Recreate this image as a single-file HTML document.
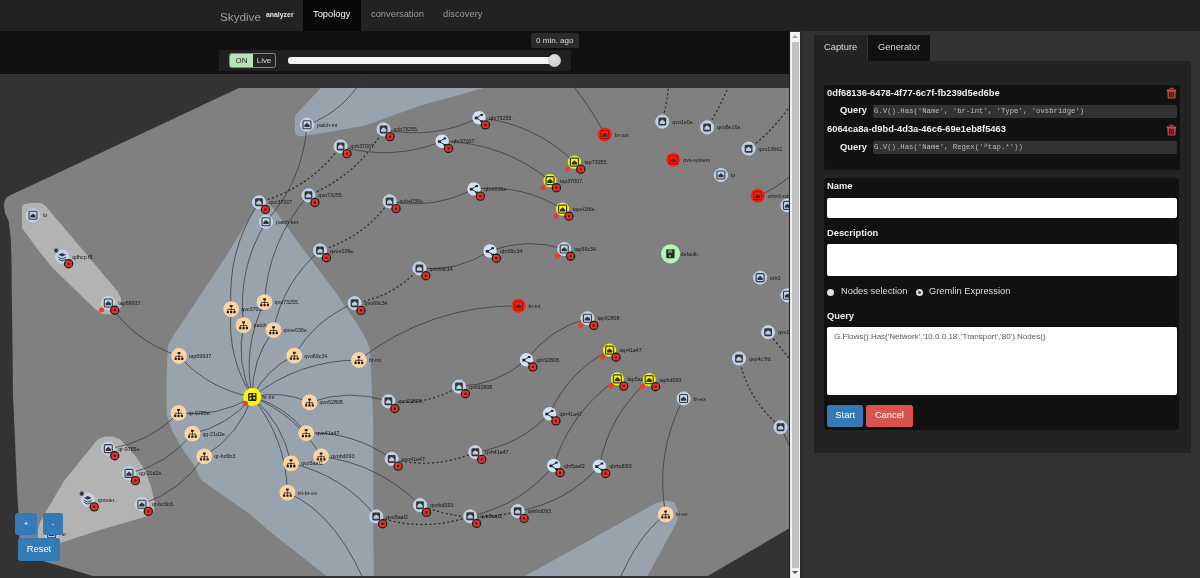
<!DOCTYPE html>
<html><head><meta charset="utf-8">
<style>
*{box-sizing:border-box;margin:0;padding:0}
html,body{width:1200px;height:578px;overflow:hidden;background:#333;font-family:"Liberation Sans",sans-serif;font-size:9.33px;color:#ddd}
.a{position:absolute;white-space:nowrap}
svg{display:block}
body>*{will-change:transform}
</style></head><body>
<!-- nav -->
<div class="a" style="left:0;top:0;width:1200px;height:31px;background:#222"></div>
<div class="a" style="left:220px;top:9.5px;font-size:11.7px;line-height:14px;color:#9d9d9d">Skydive</div>
<div class="a" style="left:266px;top:9.8px;font-size:6.9px;line-height:9px;font-weight:bold;color:#e6e6e6">analyzer</div>
<div class="a" style="left:303px;top:0;width:57.5px;height:31px;background:#080808"></div>
<div class="a" style="left:313px;top:8.5px;line-height:11px;color:#fff">Topology</div>
<div class="a" style="left:371px;top:8.5px;line-height:11px;color:#9d9d9d">conversation</div>
<div class="a" style="left:443px;top:8.5px;line-height:11px;color:#9d9d9d">discovery</div>
<!-- toolbar -->
<div class="a" style="left:0;top:31px;width:790px;height:43px;background:#111"></div>
<div class="a" style="left:219px;top:50px;width:352px;height:21px;background:#202020"></div>
<div class="a" style="left:228.5px;top:53px;width:46.5px;height:15px;border:1px solid #8a8a8a;border-radius:2.5px;background:#232323;overflow:hidden">
  <div class="a" style="left:0;top:0;width:23px;height:13px;background:#b8e2b8"></div>
  <div class="a" style="left:0;top:0;width:23px;height:13px;line-height:13px;text-align:center;color:#222;font-size:7.9px">ON</div>
  <div class="a" style="left:23px;top:0;width:22px;height:13px;line-height:13px;text-align:center;color:#ddd;font-size:7.9px">Live</div>
</div>
<div class="a" style="left:287.5px;top:56.8px;width:270px;height:7.2px;background:#f4f4f4;border-radius:3px"></div>
<div class="a" style="left:548px;top:54px;width:13.2px;height:13.2px;background:radial-gradient(circle at 45% 35%,#e4e4e4,#c2c2c2);border-radius:50%"></div>
<div class="a" style="left:530.5px;top:33.3px;width:47.5px;height:15px;background:#2b2b2b;border-radius:2.5px;line-height:15px;text-align:center;color:#ddd;font-size:8px">0 min. ago</div>
<div class="a" style="left:551.6px;top:48.3px;width:0;height:0;border-left:3px solid transparent;border-right:3px solid transparent;border-top:3.3px solid #0a0a0a"></div>
<!-- canvas -->
<div class="a" style="left:0;top:74px;width:789px;height:502px;overflow:hidden"><svg width="789" height="502" viewBox="0 74 789 502">
<rect x="0" y="74" width="789" height="502" fill="#333"/>
<polygon fill="#808080" points="256,80 800,80 800,522.2 683.7,590 140,590 93,576 43,561 30,557 22,552 19.5,540 18.6,514 17.3,495 15,440 13,395 12.5,350 11.8,295 11.5,260 10.7,238 8.7,221 5,213 3.9,206 4.5,201 7,197 13.8,193.5 30,186 60,171.9"/>
<polygon fill="#b3b3b3" points="22,206 24,204 33.7,202.8 41.5,203.2 45.6,206 117.6,291.2 121,298.2 121,306.5 118,312 113.4,314.5 102.3,314 95.4,309.3 52.5,267.7 40,252.5 22,228"/>
<polygon fill="#b3b3b3" points="97.5,439.6 104.3,436.7 112,436.5 120,439 135.8,456.5 144.8,470 151.5,488 155,506 152.7,513.9 148,516 97.5,530.8 59.3,543.2 45,546 38,541 38,530 40,521.8 63.8,481.3"/>
<polygon fill="#99a3ae" points="264,203 270,205 274.5,210 309.6,257.8 334,290 360.5,329 366,339 369.8,349 371.4,380 373.2,420 373.4,530 374,590 337,590 326.4,576 268,530 250,514.2 201.2,480 193.2,464 183.2,450 172,430.8 166.6,414 166.6,375 168,345 175,333 184,320 223.6,260 252.7,213 258,206"/>
<polygon fill="#99a3ae" points="326,80 512,80 483.7,88 420,105.8 365,125.5 320,133.5 300,136.5 296,135 294.9,131 294.9,118 296.4,114 320.8,88"/>
<polygon fill="#99a3ae" points="500,590 636,590 647,576.8 665.3,543.3 677.5,520.5 677.5,509.8 674.4,502.2 665.3,500.4 656.1,503 580,545.6"/>
<rect x="0" y="74" width="789" height="14" fill="#333"/>
<g fill="none" stroke="#3c3c3c" stroke-width="0.8">
<g stroke="#383838" stroke-width="0.75">
<path d="M231.2 309.1Q226.6 356.7 252.3 397.0"/>
<path d="M264.6 302.2Q242.1 347.5 252.3 397.0"/>
<path d="M243.6 325.2Q235.6 362.6 252.3 397.0"/>
<path d="M273.5 330.2Q251.4 360.0 252.3 397.0"/>
<path d="M179.0 356.0Q208.6 389.1 252.3 397.0"/>
<path d="M294.3 355.7Q266.2 369.1 252.3 397.0"/>
<path d="M358.9 360.0Q299.2 360.2 252.3 397.0"/>
<path d="M178.5 412.9Q218.1 417.6 252.3 397.0"/>
<path d="M192.4 433.7Q228.7 425.7 252.3 397.0"/>
<path d="M204.3 456.4Q238.5 435.0 252.3 397.0"/>
<path d="M309.5 402.4Q281.8 389.9 252.3 397.0"/>
<path d="M306.2 433.1Q285.5 405.8 252.3 397.0"/>
<path d="M321.1 456.4Q296.9 414.9 252.3 397.0"/>
<path d="M291.0 463.3Q283.1 423.5 252.3 397.0"/>
<path d="M287.4 492.6Q286.3 438.8 252.3 397.0"/>
<path d="M259.0 202.3Q226.7 250.9 231.2 309.1"/>
<path d="M308.5 195.3Q268.2 241.2 264.6 302.2"/>
<path d="M266.0 221.8Q237.0 269.6 243.6 325.2"/>
<path d="M320.0 250.5Q283.0 282.4 273.5 330.2"/>
<path d="M108.3 303.0Q134.5 341.7 179.0 356.0"/>
<path d="M354.6 303.2Q315.4 319.1 294.3 355.7"/>
<path d="M518.5 305.8Q429.4 305.4 358.9 360.0"/>
<path d="M108.3 448.6Q149.5 442.8 178.5 412.9"/>
<path d="M129.0 473.4Q167.5 464.5 192.4 433.7"/>
<path d="M141.9 504.2Q181.3 491.0 204.3 456.4"/>
<path d="M388.4 401.3Q348.8 388.3 309.5 402.4"/>
<path d="M391.7 458.9Q353.4 431.3 306.2 433.1"/>
<path d="M420.0 505.2Q378.9 463.8 321.1 456.4"/>
<path d="M376.2 516.5Q342.8 475.2 291.0 463.3"/>
<path d="M340.6 146.4Q392.2 161.3 442.1 141.3"/>
<path d="M383.6 129.4Q433.3 140.0 479.0 117.7"/>
<path d="M389.6 201.4Q433.9 209.7 474.0 188.9"/>
<path d="M419.4 268.5Q457.7 271.9 490.0 251.0"/>
<path d="M459.0 386.6Q497.4 384.8 526.5 359.8"/>
<path d="M475.3 452.2Q519.0 445.7 549.5 413.7"/>
<path d="M470.2 516.3Q520.7 505.3 553.7 465.5"/>
<path d="M517.7 511.2Q566.2 502.8 599.3 466.3"/>
<path d="M550.0 180.6Q502.8 142.4 442.1 141.3"/>
<path d="M574.4 162.1Q534.3 123.5 479.0 117.7"/>
<path d="M562.6 209.1Q521.8 183.8 474.0 188.9"/>
<path d="M564.2 249.0Q526.8 237.2 490.0 251.0"/>
<path d="M587.4 318.3Q549.8 328.6 526.5 359.8"/>
<path d="M609.6 350.1Q568.6 371.6 549.5 413.7"/>
<path d="M617.4 378.9Q570.7 411.2 553.7 465.5"/>
<path d="M649.2 379.6Q609.3 414.4 599.3 466.3"/>
<path d="M266.0 221.8Q303.2 180.3 307.0 124.7"/>
<path d="M683.6 398.5Q654.7 453.4 665.6 514.4"/>
<path d="M307 124.7Q345 112 368 70"/>
<path d="M604.8 134.5Q588 102 566 78"/>
<path d="M287.4 492.6Q340 515 372 600"/>
<path d="M665.6 514.4Q632 540 612 600"/>
<path d="M757.7 195.7Q775 190 795 172"/>
<path d="M780.6 427.2Q786 438 795 458"/>
</g>
<g stroke="#333" stroke-width="1.35" stroke-dasharray="2.2 2.3">
<path d="M259.0 202.3Q309.4 188.4 340.6 146.4"/>
<path d="M308.5 195.3Q357.4 175.3 383.6 129.4"/>
<path d="M320.0 250.5Q363.2 237.9 389.6 201.4"/>
<path d="M354.6 303.2Q393.0 297.0 419.4 268.5"/>
<path d="M388.4 401.3Q426.2 406.1 459.0 386.6"/>
<path d="M391.7 458.9Q434.7 469.9 475.3 452.2"/>
<path d="M420.0 505.2Q467.8 525.0 517.7 511.2"/>
<path d="M376.2 516.5Q423.2 532.6 470.2 516.3"/>
<path d="M739.0 358.5Q748.0 400.0 780.6 427.2"/>
<path d="M662.3 121.6Q668 100 670 70"/>
<path d="M707.1 127.4Q722 105 735 70"/>
<path d="M748.6 148.7Q778 128 800 90"/>
<path d="M768.1 332.2Q778 345 795 365"/>
</g>
</g>
<g font-family="Liberation Sans" font-size="5.3" fill="#151515">
<circle cx="307" cy="124.7" r="6.6" fill="#bfd2ea" stroke="#cadcf1" stroke-width="0.8"/><rect x="303" y="120.7" width="8" height="8" rx="1" fill="none" stroke="#3a3a3a" stroke-width="1.1"/><path d="M304.4 127v-2l1.4-1 1.2-1.2 1.2 1.2 1.4 1v2z" fill="#333"/><text x="317" y="126.7">patch-int</text>
<circle cx="340.6" cy="146.4" r="6.6" fill="#bfd2ea" stroke="#cadcf1" stroke-width="0.8"/><rect x="336.7" y="142.4" width="7.8" height="8" rx="1.4" fill="#363636"/><path d="M338 148.7v-2.2l1-0.8q1.6-2.2 3.2 0l1 0.8v2.2z" fill="#bccde2"/><circle cx="347" cy="153.6" r="4.7" fill="#1c1c1c"/><rect x="343.7" y="150.3" width="6.6" height="6.6" rx="1.8" fill="#e3302b"/><rect x="346.1" y="152.7" width="1.9" height="1.9" fill="#111"/><text x="350.6" y="148.4">qvb37007.</text>
<circle cx="383.6" cy="129.4" r="6.6" fill="#bfd2ea" stroke="#cadcf1" stroke-width="0.8"/><rect x="379.7" y="125.4" width="7.8" height="8" rx="1.4" fill="#363636"/><path d="M381 131.7v-2.2l1-0.8q1.6-2.2 3.2 0l1 0.8v2.2z" fill="#bccde2"/><circle cx="390" cy="136.6" r="4.7" fill="#1c1c1c"/><rect x="386.7" y="133.3" width="6.6" height="6.6" rx="1.8" fill="#e3302b"/><rect x="389.1" y="135.7" width="1.9" height="1.9" fill="#111"/><text x="393.6" y="131.4">qvb73255.</text>
<circle cx="442.1" cy="141.3" r="6.7" fill="#cfe2f6"/><path d="M439.5 141.6L444.5 138.5M439.5 141.6L444.5 144.7" stroke="#222" stroke-width="0.9"/><rect x="437.9" y="140.3" width="3" height="2.6" fill="#222"/><rect x="443.5" y="137.5" width="2.6" height="2" fill="#222"/><rect x="443.5" y="143.9" width="2.6" height="2" fill="#222"/><circle cx="448.5" cy="148.5" r="4.7" fill="#1c1c1c"/><rect x="445.2" y="145.2" width="6.6" height="6.6" rx="1.8" fill="#e3302b"/><rect x="447.6" y="147.6" width="1.9" height="1.9" fill="#111"/><text x="452.1" y="143.3">qbr37007.</text>
<circle cx="479" cy="117.7" r="6.7" fill="#cfe2f6"/><path d="M476.4 118L481.4 114.9M476.4 118L481.4 121.1" stroke="#222" stroke-width="0.9"/><rect x="474.8" y="116.7" width="3" height="2.6" fill="#222"/><rect x="480.4" y="113.9" width="2.6" height="2" fill="#222"/><rect x="480.4" y="120.3" width="2.6" height="2" fill="#222"/><circle cx="485.4" cy="124.9" r="4.7" fill="#1c1c1c"/><rect x="482.1" y="121.6" width="6.6" height="6.6" rx="1.8" fill="#e3302b"/><rect x="484.4" y="124" width="1.9" height="1.9" fill="#111"/><text x="489" y="119.7">qbr73255.</text>
<circle cx="259" cy="202.3" r="6.6" fill="#bfd2ea" stroke="#cadcf1" stroke-width="0.8"/><rect x="255.1" y="198.3" width="7.8" height="8" rx="1.4" fill="#363636"/><path d="M256.4 204.6v-2.2l1-0.8q1.6-2.2 3.2 0l1 0.8v2.2z" fill="#bccde2"/><circle cx="265.4" cy="209.5" r="4.7" fill="#1c1c1c"/><rect x="262.1" y="206.2" width="6.6" height="6.6" rx="1.8" fill="#e3302b"/><rect x="264.4" y="208.6" width="1.9" height="1.9" fill="#111"/><text x="269" y="204.3">qvo37007.</text>
<circle cx="266" cy="221.8" r="6.6" fill="#bfd2ea" stroke="#cadcf1" stroke-width="0.8"/><rect x="262" y="217.8" width="8" height="8" rx="1" fill="none" stroke="#3a3a3a" stroke-width="1.1"/><path d="M263.4 224.1v-2l1.4-1 1.2-1.2 1.2 1.2 1.4 1v2z" fill="#333"/><text x="276" y="223.8">patch-tun</text>
<circle cx="308.5" cy="195.3" r="6.6" fill="#bfd2ea" stroke="#cadcf1" stroke-width="0.8"/><rect x="304.6" y="191.3" width="7.8" height="8" rx="1.4" fill="#363636"/><path d="M305.9 197.6v-2.2l1-0.8q1.6-2.2 3.2 0l1 0.8v2.2z" fill="#bccde2"/><circle cx="314.9" cy="202.5" r="4.7" fill="#1c1c1c"/><rect x="311.6" y="199.2" width="6.6" height="6.6" rx="1.8" fill="#e3302b"/><rect x="313.9" y="201.6" width="1.9" height="1.9" fill="#111"/><text x="318.5" y="197.3">qvo73255.</text>
<circle cx="389.6" cy="201.4" r="6.6" fill="#bfd2ea" stroke="#cadcf1" stroke-width="0.8"/><rect x="385.7" y="197.4" width="7.8" height="8" rx="1.4" fill="#363636"/><path d="M387 203.7v-2.2l1-0.8q1.6-2.2 3.2 0l1 0.8v2.2z" fill="#bccde2"/><circle cx="396" cy="208.6" r="4.7" fill="#1c1c1c"/><rect x="392.7" y="205.3" width="6.6" height="6.6" rx="1.8" fill="#e3302b"/><rect x="395.1" y="207.7" width="1.9" height="1.9" fill="#111"/><text x="399.6" y="203.4">qvbe036e.</text>
<circle cx="474" cy="188.9" r="6.7" fill="#cfe2f6"/><path d="M471.4 189.2L476.4 186.1M471.4 189.2L476.4 192.3" stroke="#222" stroke-width="0.9"/><rect x="469.8" y="187.9" width="3" height="2.6" fill="#222"/><rect x="475.4" y="185.1" width="2.6" height="2" fill="#222"/><rect x="475.4" y="191.5" width="2.6" height="2" fill="#222"/><circle cx="480.4" cy="196.1" r="4.7" fill="#1c1c1c"/><rect x="477.1" y="192.8" width="6.6" height="6.6" rx="1.8" fill="#e3302b"/><rect x="479.4" y="195.2" width="1.9" height="1.9" fill="#111"/><text x="484" y="190.9">qbre036e.</text>
<circle cx="574.4" cy="162.1" r="6.6" fill="#f4f400"/><rect x="570.4" y="158.1" width="8" height="8" rx="1" fill="none" stroke="#3c3c3c" stroke-width="1.2"/><path d="M571.8 164.4v-2l1.4-1 1.2-1.2 1.2 1.2 1.4 1v2z" fill="#2e2e2e"/><circle cx="580.8" cy="169.3" r="4.7" fill="#1c1c1c"/><rect x="577.5" y="166" width="6.6" height="6.6" rx="1.8" fill="#e3302b"/><rect x="579.8" y="168.3" width="1.9" height="1.9" fill="#111"/><circle cx="567.7" cy="169.1" r="2.6" fill="#f03a2e"/><text x="584.4" y="164.1">tap73255.</text>
<circle cx="550" cy="180.6" r="6.6" fill="#f4f400"/><rect x="546" y="176.6" width="8" height="8" rx="1" fill="none" stroke="#3c3c3c" stroke-width="1.2"/><path d="M547.4 182.9v-2l1.4-1 1.2-1.2 1.2 1.2 1.4 1v2z" fill="#2e2e2e"/><circle cx="556.4" cy="187.8" r="4.7" fill="#1c1c1c"/><rect x="553.1" y="184.5" width="6.6" height="6.6" rx="1.8" fill="#e3302b"/><rect x="555.4" y="186.8" width="1.9" height="1.9" fill="#111"/><circle cx="543.3" cy="187.6" r="2.6" fill="#f03a2e"/><text x="560" y="182.6">tap37007.</text>
<circle cx="562.6" cy="209.1" r="6.6" fill="#f4f400"/><rect x="558.6" y="205.1" width="8" height="8" rx="1" fill="none" stroke="#3c3c3c" stroke-width="1.2"/><path d="M560 211.4v-2l1.4-1 1.2-1.2 1.2 1.2 1.4 1v2z" fill="#2e2e2e"/><circle cx="569" cy="216.3" r="4.7" fill="#1c1c1c"/><rect x="565.7" y="213" width="6.6" height="6.6" rx="1.8" fill="#e3302b"/><rect x="568" y="215.3" width="1.9" height="1.9" fill="#111"/><circle cx="555.9" cy="216.1" r="2.6" fill="#f03a2e"/><text x="572.6" y="211.1">tape036e.</text>
<circle cx="604.8" cy="134.5" r="7" fill="#fe1c0c"/><rect x="600.8" y="130.5" width="8" height="8" rx="1" fill="none" stroke="#b00d05" stroke-width="1.1"/><path d="M602.2 136.8v-2l1.4-1 1.2-1.2 1.2 1.2 1.4 1v2z" fill="#333"/><text x="614.8" y="136.5">br-tun</text>
<circle cx="662.3" cy="121.6" r="6.6" fill="#bfd2ea" stroke="#cadcf1" stroke-width="0.8"/><rect x="658.4" y="117.6" width="7.8" height="8" rx="1.4" fill="#363636"/><path d="M659.7 123.9v-2.2l1-0.8q1.6-2.2 3.2 0l1 0.8v2.2z" fill="#bccde2"/><text x="672.3" y="123.6">qvo1e0e.</text>
<circle cx="707.1" cy="127.4" r="6.6" fill="#bfd2ea" stroke="#cadcf1" stroke-width="0.8"/><rect x="703.2" y="123.4" width="7.8" height="8" rx="1.4" fill="#363636"/><path d="M704.5 129.7v-2.2l1-0.8q1.6-2.2 3.2 0l1 0.8v2.2z" fill="#bccde2"/><text x="717.1" y="129.4">qvo8e16e.</text>
<circle cx="748.6" cy="148.7" r="6.6" fill="#bfd2ea" stroke="#cadcf1" stroke-width="0.8"/><rect x="744.7" y="144.7" width="7.8" height="8" rx="1.4" fill="#363636"/><path d="M746 151v-2.2l1-0.8q1.6-2.2 3.2 0l1 0.8v2.2z" fill="#bccde2"/><text x="758.6" y="150.7">qvo13942.</text>
<circle cx="673.3" cy="159.8" r="7" fill="#fe1c0c"/><rect x="669.3" y="155.8" width="8" height="8" rx="1" fill="none" stroke="#b00d05" stroke-width="1.1"/><path d="M670.7 162.1v-2l1.4-1 1.2-1.2 1.2 1.2 1.4 1v2z" fill="#333"/><text x="683.3" y="161.8">ovs-system</text>
<circle cx="720.9" cy="175" r="6.6" fill="#bfd2ea" stroke="#cadcf1" stroke-width="0.8"/><rect x="716.9" y="171" width="8" height="8" rx="1" fill="none" stroke="#3a3a3a" stroke-width="1.1"/><path d="M718.3 177.3v-2l1.4-1 1.2-1.2 1.2 1.2 1.4 1v2z" fill="#333"/><text x="730.9" y="177">lo</text>
<circle cx="757.7" cy="195.7" r="7" fill="#fe1c0c"/><rect x="753.7" y="191.7" width="8" height="8" rx="1" fill="none" stroke="#b00d05" stroke-width="1.1"/><path d="M755.1 198v-2l1.4-1 1.2-1.2 1.2 1.2 1.4 1v2z" fill="#333"/><text x="767.7" y="197.7">virbr0-nic</text>
<circle cx="787.5" cy="205.4" r="6.6" fill="#bfd2ea" stroke="#cadcf1" stroke-width="0.8"/><rect x="783.5" y="201.4" width="8" height="8" rx="1" fill="none" stroke="#3a3a3a" stroke-width="1.1"/><path d="M784.9 207.7v-2l1.4-1 1.2-1.2 1.2 1.2 1.4 1v2z" fill="#333"/>
<circle cx="33" cy="215.3" r="6.6" fill="#bfd2ea" stroke="#cadcf1" stroke-width="0.8"/><rect x="29" y="211.3" width="8" height="8" rx="1" fill="none" stroke="#3a3a3a" stroke-width="1.1"/><path d="M30.4 217.6v-2l1.4-1 1.2-1.2 1.2 1.2 1.4 1v2z" fill="#333"/><text x="43" y="217.3">lo</text>
<circle cx="62.2" cy="256.6" r="6.6" fill="#bfd2ea" stroke="#cadcf1" stroke-width="0.8"/><path d="M58.4 254.8l3.8-1.8 3.8 1.8-3.8 1.8z" fill="#333"/><path d="M58.4 257.2l3.8 1.8 3.8-1.8M58.4 259.2l3.8 1.8 3.8-1.8" stroke="#333" stroke-width="0.9" fill="none"/><circle cx="56.2" cy="250.6" r="2.1" fill="#333" stroke="#777" stroke-width="0.6"/><circle cx="68.6" cy="263.8" r="4.7" fill="#1c1c1c"/><rect x="65.3" y="260.5" width="6.6" height="6.6" rx="1.8" fill="#e3302b"/><rect x="67.7" y="262.9" width="1.9" height="1.9" fill="#111"/><text x="72.2" y="258.6">qdhcp.f8.</text>
<circle cx="108.3" cy="303" r="6.6" fill="#bfd2ea" stroke="#cadcf1" stroke-width="0.8"/><rect x="104.3" y="299" width="8" height="8" rx="1" fill="none" stroke="#3a3a3a" stroke-width="1.1"/><path d="M105.7 305.3v-2l1.4-1 1.2-1.2 1.2 1.2 1.4 1v2z" fill="#333"/><circle cx="114.7" cy="310.2" r="4.7" fill="#1c1c1c"/><rect x="111.4" y="306.9" width="6.6" height="6.6" rx="1.8" fill="#e3302b"/><rect x="113.8" y="309.2" width="1.9" height="1.9" fill="#111"/><circle cx="101.6" cy="310" r="2.6" fill="#f03a2e"/><text x="118.3" y="305">tap69937.</text>
<circle cx="320" cy="250.5" r="6.6" fill="#bfd2ea" stroke="#cadcf1" stroke-width="0.8"/><rect x="316.1" y="246.5" width="7.8" height="8" rx="1.4" fill="#363636"/><path d="M317.4 252.8v-2.2l1-0.8q1.6-2.2 3.2 0l1 0.8v2.2z" fill="#bccde2"/><circle cx="326.4" cy="257.7" r="4.7" fill="#1c1c1c"/><rect x="323.1" y="254.4" width="6.6" height="6.6" rx="1.8" fill="#e3302b"/><rect x="325.4" y="256.8" width="1.9" height="1.9" fill="#111"/><text x="330" y="252.5">qvoe036e.</text>
<circle cx="354.6" cy="303.2" r="6.6" fill="#bfd2ea" stroke="#cadcf1" stroke-width="0.8"/><rect x="350.7" y="299.2" width="7.8" height="8" rx="1.4" fill="#363636"/><path d="M352 305.5v-2.2l1-0.8q1.6-2.2 3.2 0l1 0.8v2.2z" fill="#bccde2"/><circle cx="361" cy="310.4" r="4.7" fill="#1c1c1c"/><rect x="357.7" y="307.1" width="6.6" height="6.6" rx="1.8" fill="#e3302b"/><rect x="360.1" y="309.4" width="1.9" height="1.9" fill="#111"/><text x="364.6" y="305.2">qvo69c34.</text>
<circle cx="231.2" cy="309.1" r="7.9" fill="#fcd3a2"/><rect x="229.8" y="305.1" width="2.8" height="2" rx="0.3" fill="#1e1e1e"/><path d="M231.2 307v2.3M227.9 309.4h6.6M227.9 309.4v1.5M231.2 309.4v1.5M234.5 309.4v1.5" stroke="#1e1e1e" stroke-width="0.75" fill="none"/><rect x="226.8" y="310.9" width="2.2" height="2.3" rx="0.3" fill="#1e1e1e"/><rect x="230.1" y="310.9" width="2.2" height="2.3" rx="0.3" fill="#1e1e1e"/><rect x="233.4" y="310.9" width="2.2" height="2.3" rx="0.3" fill="#1e1e1e"/><text x="241.2" y="311.1">qvo37007.</text>
<circle cx="264.6" cy="302.2" r="7.9" fill="#fcd3a2"/><rect x="263.2" y="298.2" width="2.8" height="2" rx="0.3" fill="#1e1e1e"/><path d="M264.6 300.1v2.3M261.3 302.5h6.6M261.3 302.5v1.5M264.6 302.5v1.5M267.9 302.5v1.5" stroke="#1e1e1e" stroke-width="0.75" fill="none"/><rect x="260.2" y="304" width="2.2" height="2.3" rx="0.3" fill="#1e1e1e"/><rect x="263.5" y="304" width="2.2" height="2.3" rx="0.3" fill="#1e1e1e"/><rect x="266.8" y="304" width="2.2" height="2.3" rx="0.3" fill="#1e1e1e"/><text x="274.6" y="304.2">qvo73255.</text>
<circle cx="243.6" cy="325.2" r="7.9" fill="#fcd3a2"/><rect x="242.2" y="321.2" width="2.8" height="2" rx="0.3" fill="#1e1e1e"/><path d="M243.6 323.1v2.3M240.3 325.5h6.6M240.3 325.5v1.5M243.6 325.5v1.5M246.9 325.5v1.5" stroke="#1e1e1e" stroke-width="0.75" fill="none"/><rect x="239.2" y="327" width="2.2" height="2.3" rx="0.3" fill="#1e1e1e"/><rect x="242.5" y="327" width="2.2" height="2.3" rx="0.3" fill="#1e1e1e"/><rect x="245.8" y="327" width="2.2" height="2.3" rx="0.3" fill="#1e1e1e"/><text x="253.6" y="327.2">patch.</text>
<circle cx="273.5" cy="330.2" r="7.9" fill="#fcd3a2"/><rect x="272.1" y="326.2" width="2.8" height="2" rx="0.3" fill="#1e1e1e"/><path d="M273.5 328.1v2.3M270.2 330.5h6.6M270.2 330.5v1.5M273.5 330.5v1.5M276.8 330.5v1.5" stroke="#1e1e1e" stroke-width="0.75" fill="none"/><rect x="269.1" y="332" width="2.2" height="2.3" rx="0.3" fill="#1e1e1e"/><rect x="272.4" y="332" width="2.2" height="2.3" rx="0.3" fill="#1e1e1e"/><rect x="275.7" y="332" width="2.2" height="2.3" rx="0.3" fill="#1e1e1e"/><text x="283.5" y="332.2">qvoe036e.</text>
<circle cx="179" cy="356" r="7.9" fill="#fcd3a2"/><rect x="177.6" y="352" width="2.8" height="2" rx="0.3" fill="#1e1e1e"/><path d="M179 353.9v2.3M175.7 356.3h6.6M175.7 356.3v1.5M179 356.3v1.5M182.3 356.3v1.5" stroke="#1e1e1e" stroke-width="0.75" fill="none"/><rect x="174.6" y="357.8" width="2.2" height="2.3" rx="0.3" fill="#1e1e1e"/><rect x="177.9" y="357.8" width="2.2" height="2.3" rx="0.3" fill="#1e1e1e"/><rect x="181.2" y="357.8" width="2.2" height="2.3" rx="0.3" fill="#1e1e1e"/><text x="189" y="358">tap69937.</text>
<circle cx="294.3" cy="355.7" r="7.9" fill="#fcd3a2"/><rect x="292.9" y="351.7" width="2.8" height="2" rx="0.3" fill="#1e1e1e"/><path d="M294.3 353.6v2.3M291 356h6.6M291 356v1.5M294.3 356v1.5M297.6 356v1.5" stroke="#1e1e1e" stroke-width="0.75" fill="none"/><rect x="289.9" y="357.5" width="2.2" height="2.3" rx="0.3" fill="#1e1e1e"/><rect x="293.2" y="357.5" width="2.2" height="2.3" rx="0.3" fill="#1e1e1e"/><rect x="296.5" y="357.5" width="2.2" height="2.3" rx="0.3" fill="#1e1e1e"/><text x="304.3" y="357.7">qvo69c34.</text>
<circle cx="358.9" cy="360" r="7.9" fill="#fcd3a2"/><rect x="357.5" y="356" width="2.8" height="2" rx="0.3" fill="#1e1e1e"/><path d="M358.9 357.9v2.3M355.6 360.3h6.6M355.6 360.3v1.5M358.9 360.3v1.5M362.2 360.3v1.5" stroke="#1e1e1e" stroke-width="0.75" fill="none"/><rect x="354.5" y="361.8" width="2.2" height="2.3" rx="0.3" fill="#1e1e1e"/><rect x="357.8" y="361.8" width="2.2" height="2.3" rx="0.3" fill="#1e1e1e"/><rect x="361.1" y="361.8" width="2.2" height="2.3" rx="0.3" fill="#1e1e1e"/><text x="368.9" y="362">br-int</text>
<circle cx="419.4" cy="268.5" r="6.6" fill="#bfd2ea" stroke="#cadcf1" stroke-width="0.8"/><rect x="415.5" y="264.5" width="7.8" height="8" rx="1.4" fill="#363636"/><path d="M416.8 270.8v-2.2l1-0.8q1.6-2.2 3.2 0l1 0.8v2.2z" fill="#bccde2"/><circle cx="425.8" cy="275.7" r="4.7" fill="#1c1c1c"/><rect x="422.5" y="272.4" width="6.6" height="6.6" rx="1.8" fill="#e3302b"/><rect x="424.8" y="274.8" width="1.9" height="1.9" fill="#111"/><text x="429.4" y="270.5">qvb69c34.</text>
<circle cx="490" cy="251" r="6.7" fill="#cfe2f6"/><path d="M487.4 251.3L492.4 248.2M487.4 251.3L492.4 254.4" stroke="#222" stroke-width="0.9"/><rect x="485.8" y="250" width="3" height="2.6" fill="#222"/><rect x="491.4" y="247.2" width="2.6" height="2" fill="#222"/><rect x="491.4" y="253.6" width="2.6" height="2" fill="#222"/><circle cx="496.4" cy="258.2" r="4.7" fill="#1c1c1c"/><rect x="493.1" y="254.9" width="6.6" height="6.6" rx="1.8" fill="#e3302b"/><rect x="495.4" y="257.2" width="1.9" height="1.9" fill="#111"/><text x="500" y="253">qbr69c34.</text>
<circle cx="564.2" cy="249" r="6.6" fill="#bfd2ea" stroke="#cadcf1" stroke-width="0.8"/><rect x="560.2" y="245" width="8" height="8" rx="1" fill="none" stroke="#3a3a3a" stroke-width="1.1"/><path d="M561.6 251.3v-2l1.4-1 1.2-1.2 1.2 1.2 1.4 1v2z" fill="#333"/><circle cx="570.6" cy="256.2" r="4.7" fill="#1c1c1c"/><rect x="567.3" y="252.9" width="6.6" height="6.6" rx="1.8" fill="#e3302b"/><rect x="569.6" y="255.2" width="1.9" height="1.9" fill="#111"/><circle cx="557.5" cy="256" r="2.6" fill="#f03a2e"/><text x="574.2" y="251">tap69c34.</text>
<circle cx="518.5" cy="305.8" r="7" fill="#fe1c0c"/><rect x="514.5" y="301.8" width="8" height="8" rx="1" fill="none" stroke="#b00d05" stroke-width="1.1"/><path d="M515.9 308.1v-2l1.4-1 1.2-1.2 1.2 1.2 1.4 1v2z" fill="#333"/><text x="528.5" y="307.8">br-int</text>
<circle cx="587.4" cy="318.3" r="6.6" fill="#bfd2ea" stroke="#cadcf1" stroke-width="0.8"/><rect x="583.4" y="314.3" width="8" height="8" rx="1" fill="none" stroke="#3a3a3a" stroke-width="1.1"/><path d="M584.8 320.6v-2l1.4-1 1.2-1.2 1.2 1.2 1.4 1v2z" fill="#333"/><circle cx="593.8" cy="325.5" r="4.7" fill="#1c1c1c"/><rect x="590.5" y="322.2" width="6.6" height="6.6" rx="1.8" fill="#e3302b"/><rect x="592.8" y="324.6" width="1.9" height="1.9" fill="#111"/><circle cx="580.7" cy="325.3" r="2.6" fill="#f03a2e"/><text x="597.4" y="320.3">tap92808.</text>
<circle cx="526.5" cy="359.8" r="6.7" fill="#cfe2f6"/><path d="M523.9 360.1L528.9 357M523.9 360.1L528.9 363.2" stroke="#222" stroke-width="0.9"/><rect x="522.3" y="358.8" width="3" height="2.6" fill="#222"/><rect x="527.9" y="356" width="2.6" height="2" fill="#222"/><rect x="527.9" y="362.4" width="2.6" height="2" fill="#222"/><circle cx="532.9" cy="367" r="4.7" fill="#1c1c1c"/><rect x="529.6" y="363.7" width="6.6" height="6.6" rx="1.8" fill="#e3302b"/><rect x="531.9" y="366.1" width="1.9" height="1.9" fill="#111"/><text x="536.5" y="361.8">qbr92808.</text>
<circle cx="609.6" cy="350.1" r="6.6" fill="#f4f400"/><rect x="605.6" y="346.1" width="8" height="8" rx="1" fill="none" stroke="#3c3c3c" stroke-width="1.2"/><path d="M607 352.4v-2l1.4-1 1.2-1.2 1.2 1.2 1.4 1v2z" fill="#2e2e2e"/><circle cx="616" cy="357.3" r="4.7" fill="#1c1c1c"/><rect x="612.7" y="354" width="6.6" height="6.6" rx="1.8" fill="#e3302b"/><rect x="615" y="356.4" width="1.9" height="1.9" fill="#111"/><circle cx="602.9" cy="357.1" r="2.6" fill="#f03a2e"/><text x="619.6" y="352.1">tap41a47.</text>
<circle cx="670.6" cy="253.8" r="9.6" fill="#b2f6b9"/><rect x="666.2" y="249.3" width="8.4" height="9" rx="1" fill="#2b2b2b"/><rect x="667.8" y="249.3" width="4.4" height="3.6" fill="#6a8a6a"/><rect x="669" y="255" width="2" height="2" fill="#6a8a6a"/><text x="680.6" y="255.8">default-.</text>
<circle cx="760.1" cy="277.6" r="6.6" fill="#bfd2ea" stroke="#cadcf1" stroke-width="0.8"/><rect x="756.1" y="273.6" width="8" height="8" rx="1" fill="none" stroke="#3a3a3a" stroke-width="1.1"/><path d="M757.5 279.9v-2l1.4-1 1.2-1.2 1.2 1.2 1.4 1v2z" fill="#333"/><text x="770.1" y="279.6">eth0</text>
<circle cx="787.5" cy="295.3" r="6.6" fill="#bfd2ea" stroke="#cadcf1" stroke-width="0.8"/><rect x="783.5" y="291.3" width="8" height="8" rx="1" fill="none" stroke="#3a3a3a" stroke-width="1.1"/><path d="M784.9 297.6v-2l1.4-1 1.2-1.2 1.2 1.2 1.4 1v2z" fill="#333"/>
<circle cx="768.1" cy="332.2" r="6.6" fill="#bfd2ea" stroke="#cadcf1" stroke-width="0.8"/><rect x="764.2" y="328.2" width="7.8" height="8" rx="1.4" fill="#363636"/><path d="M765.5 334.5v-2.2l1-0.8q1.6-2.2 3.2 0l1 0.8v2.2z" fill="#bccde2"/><text x="778.1" y="334.2">qvo0c1a.</text>
<circle cx="739" cy="358.5" r="6.6" fill="#bfd2ea" stroke="#cadcf1" stroke-width="0.8"/><rect x="735.1" y="354.5" width="7.8" height="8" rx="1.4" fill="#363636"/><path d="M736.4 360.8v-2.2l1-0.8q1.6-2.2 3.2 0l1 0.8v2.2z" fill="#bccde2"/><text x="749" y="360.5">qvo4c7fd.</text>
<circle cx="252.3" cy="397" r="9.1" fill="#f8f800"/><rect x="248.1" y="393" width="8.4" height="8" rx="1" fill="#222"/><circle cx="250.4" cy="395.3" r="1.15" fill="#e8e800"/><circle cx="254.2" cy="394.7" r="1.15" fill="#e8e800"/><circle cx="250.4" cy="398.7" r="1.15" fill="#e8e800"/><circle cx="254.2" cy="398.2" r="1.15" fill="#e8e800"/><circle cx="245.4" cy="403.6" r="2.6" fill="#f03a2e"/><text x="262.3" y="399">br-int</text>
<circle cx="178.5" cy="412.9" r="7.9" fill="#fcd3a2"/><rect x="177.1" y="408.9" width="2.8" height="2" rx="0.3" fill="#1e1e1e"/><path d="M178.5 410.8v2.3M175.2 413.2h6.6M175.2 413.2v1.5M178.5 413.2v1.5M181.8 413.2v1.5" stroke="#1e1e1e" stroke-width="0.75" fill="none"/><rect x="174.1" y="414.7" width="2.2" height="2.3" rx="0.3" fill="#1e1e1e"/><rect x="177.4" y="414.7" width="2.2" height="2.3" rx="0.3" fill="#1e1e1e"/><rect x="180.7" y="414.7" width="2.2" height="2.3" rx="0.3" fill="#1e1e1e"/><text x="188.5" y="414.9">qr-9785e.</text>
<circle cx="192.4" cy="433.7" r="7.9" fill="#fcd3a2"/><rect x="191" y="429.7" width="2.8" height="2" rx="0.3" fill="#1e1e1e"/><path d="M192.4 431.6v2.3M189.1 434h6.6M189.1 434v1.5M192.4 434v1.5M195.7 434v1.5" stroke="#1e1e1e" stroke-width="0.75" fill="none"/><rect x="188" y="435.5" width="2.2" height="2.3" rx="0.3" fill="#1e1e1e"/><rect x="191.3" y="435.5" width="2.2" height="2.3" rx="0.3" fill="#1e1e1e"/><rect x="194.6" y="435.5" width="2.2" height="2.3" rx="0.3" fill="#1e1e1e"/><text x="202.4" y="435.7">qg-21d2e.</text>
<circle cx="204.3" cy="456.4" r="7.9" fill="#fcd3a2"/><rect x="202.9" y="452.4" width="2.8" height="2" rx="0.3" fill="#1e1e1e"/><path d="M204.3 454.3v2.3M201 456.7h6.6M201 456.7v1.5M204.3 456.7v1.5M207.6 456.7v1.5" stroke="#1e1e1e" stroke-width="0.75" fill="none"/><rect x="199.9" y="458.2" width="2.2" height="2.3" rx="0.3" fill="#1e1e1e"/><rect x="203.2" y="458.2" width="2.2" height="2.3" rx="0.3" fill="#1e1e1e"/><rect x="206.5" y="458.2" width="2.2" height="2.3" rx="0.3" fill="#1e1e1e"/><text x="214.3" y="458.4">qr-bc6b3.</text>
<circle cx="309.5" cy="402.4" r="7.9" fill="#fcd3a2"/><rect x="308.1" y="398.4" width="2.8" height="2" rx="0.3" fill="#1e1e1e"/><path d="M309.5 400.3v2.3M306.2 402.7h6.6M306.2 402.7v1.5M309.5 402.7v1.5M312.8 402.7v1.5" stroke="#1e1e1e" stroke-width="0.75" fill="none"/><rect x="305.1" y="404.2" width="2.2" height="2.3" rx="0.3" fill="#1e1e1e"/><rect x="308.4" y="404.2" width="2.2" height="2.3" rx="0.3" fill="#1e1e1e"/><rect x="311.7" y="404.2" width="2.2" height="2.3" rx="0.3" fill="#1e1e1e"/><text x="319.5" y="404.4">qvo92808.</text>
<circle cx="306.2" cy="433.1" r="7.9" fill="#fcd3a2"/><rect x="304.8" y="429.1" width="2.8" height="2" rx="0.3" fill="#1e1e1e"/><path d="M306.2 431v2.3M302.9 433.4h6.6M302.9 433.4v1.5M306.2 433.4v1.5M309.5 433.4v1.5" stroke="#1e1e1e" stroke-width="0.75" fill="none"/><rect x="301.8" y="434.9" width="2.2" height="2.3" rx="0.3" fill="#1e1e1e"/><rect x="305.1" y="434.9" width="2.2" height="2.3" rx="0.3" fill="#1e1e1e"/><rect x="308.4" y="434.9" width="2.2" height="2.3" rx="0.3" fill="#1e1e1e"/><text x="316.2" y="435.1">qvo41a47.</text>
<circle cx="321.1" cy="456.4" r="7.9" fill="#fcd3a2"/><rect x="319.7" y="452.4" width="2.8" height="2" rx="0.3" fill="#1e1e1e"/><path d="M321.1 454.3v2.3M317.8 456.7h6.6M317.8 456.7v1.5M321.1 456.7v1.5M324.4 456.7v1.5" stroke="#1e1e1e" stroke-width="0.75" fill="none"/><rect x="316.7" y="458.2" width="2.2" height="2.3" rx="0.3" fill="#1e1e1e"/><rect x="320" y="458.2" width="2.2" height="2.3" rx="0.3" fill="#1e1e1e"/><rect x="323.3" y="458.2" width="2.2" height="2.3" rx="0.3" fill="#1e1e1e"/><text x="331.1" y="458.4">qvobd093.</text>
<circle cx="291" cy="463.3" r="7.9" fill="#fcd3a2"/><rect x="289.6" y="459.3" width="2.8" height="2" rx="0.3" fill="#1e1e1e"/><path d="M291 461.2v2.3M287.7 463.6h6.6M287.7 463.6v1.5M291 463.6v1.5M294.3 463.6v1.5" stroke="#1e1e1e" stroke-width="0.75" fill="none"/><rect x="286.6" y="465.1" width="2.2" height="2.3" rx="0.3" fill="#1e1e1e"/><rect x="289.9" y="465.1" width="2.2" height="2.3" rx="0.3" fill="#1e1e1e"/><rect x="293.2" y="465.1" width="2.2" height="2.3" rx="0.3" fill="#1e1e1e"/><text x="301" y="465.3">qvo5aaf2.</text>
<circle cx="287.4" cy="492.6" r="7.9" fill="#fcd3a2"/><rect x="286" y="488.6" width="2.8" height="2" rx="0.3" fill="#1e1e1e"/><path d="M287.4 490.5v2.3M284.1 492.9h6.6M284.1 492.9v1.5M287.4 492.9v1.5M290.7 492.9v1.5" stroke="#1e1e1e" stroke-width="0.75" fill="none"/><rect x="283" y="494.4" width="2.2" height="2.3" rx="0.3" fill="#1e1e1e"/><rect x="286.3" y="494.4" width="2.2" height="2.3" rx="0.3" fill="#1e1e1e"/><rect x="289.6" y="494.4" width="2.2" height="2.3" rx="0.3" fill="#1e1e1e"/><text x="297.4" y="494.6">int-br-ex</text>
<circle cx="388.4" cy="401.3" r="6.6" fill="#bfd2ea" stroke="#cadcf1" stroke-width="0.8"/><rect x="384.5" y="397.3" width="7.8" height="8" rx="1.4" fill="#363636"/><path d="M385.8 403.6v-2.2l1-0.8q1.6-2.2 3.2 0l1 0.8v2.2z" fill="#bccde2"/><circle cx="394.8" cy="408.5" r="4.7" fill="#1c1c1c"/><rect x="391.5" y="405.2" width="6.6" height="6.6" rx="1.8" fill="#e3302b"/><rect x="393.8" y="407.6" width="1.9" height="1.9" fill="#111"/><text x="398.4" y="403.3">qvo92808.</text>
<circle cx="391.7" cy="458.9" r="6.6" fill="#bfd2ea" stroke="#cadcf1" stroke-width="0.8"/><rect x="387.8" y="454.9" width="7.8" height="8" rx="1.4" fill="#363636"/><path d="M389.1 461.2v-2.2l1-0.8q1.6-2.2 3.2 0l1 0.8v2.2z" fill="#bccde2"/><circle cx="398.1" cy="466.1" r="4.7" fill="#1c1c1c"/><rect x="394.8" y="462.8" width="6.6" height="6.6" rx="1.8" fill="#e3302b"/><rect x="397.1" y="465.1" width="1.9" height="1.9" fill="#111"/><text x="401.7" y="460.9">qvo41a47.</text>
<circle cx="376.2" cy="516.5" r="6.6" fill="#bfd2ea" stroke="#cadcf1" stroke-width="0.8"/><rect x="372.3" y="512.5" width="7.8" height="8" rx="1.4" fill="#363636"/><path d="M373.6 518.8v-2.2l1-0.8q1.6-2.2 3.2 0l1 0.8v2.2z" fill="#bccde2"/><circle cx="382.6" cy="523.7" r="4.7" fill="#1c1c1c"/><rect x="379.3" y="520.4" width="6.6" height="6.6" rx="1.8" fill="#e3302b"/><rect x="381.6" y="522.8" width="1.9" height="1.9" fill="#111"/><text x="386.2" y="518.5">qvo5aaf2.</text>
<circle cx="459" cy="386.6" r="6.6" fill="#bfd2ea" stroke="#cadcf1" stroke-width="0.8"/><rect x="455.1" y="382.6" width="7.8" height="8" rx="1.4" fill="#363636"/><path d="M456.4 388.9v-2.2l1-0.8q1.6-2.2 3.2 0l1 0.8v2.2z" fill="#bccde2"/><circle cx="465.4" cy="393.8" r="4.7" fill="#1c1c1c"/><rect x="462.1" y="390.5" width="6.6" height="6.6" rx="1.8" fill="#e3302b"/><rect x="464.4" y="392.9" width="1.9" height="1.9" fill="#111"/><text x="469" y="388.6">qvb92808.</text>
<circle cx="549.5" cy="413.7" r="6.7" fill="#cfe2f6"/><path d="M546.9 414L551.9 410.9M546.9 414L551.9 417.1" stroke="#222" stroke-width="0.9"/><rect x="545.3" y="412.7" width="3" height="2.6" fill="#222"/><rect x="550.9" y="409.9" width="2.6" height="2" fill="#222"/><rect x="550.9" y="416.3" width="2.6" height="2" fill="#222"/><circle cx="555.9" cy="420.9" r="4.7" fill="#1c1c1c"/><rect x="552.6" y="417.6" width="6.6" height="6.6" rx="1.8" fill="#e3302b"/><rect x="554.9" y="419.9" width="1.9" height="1.9" fill="#111"/><text x="559.5" y="415.7">qbr41a47.</text>
<circle cx="475.3" cy="452.2" r="6.6" fill="#bfd2ea" stroke="#cadcf1" stroke-width="0.8"/><rect x="471.4" y="448.2" width="7.8" height="8" rx="1.4" fill="#363636"/><path d="M472.7 454.5v-2.2l1-0.8q1.6-2.2 3.2 0l1 0.8v2.2z" fill="#bccde2"/><circle cx="481.7" cy="459.4" r="4.7" fill="#1c1c1c"/><rect x="478.4" y="456.1" width="6.6" height="6.6" rx="1.8" fill="#e3302b"/><rect x="480.8" y="458.4" width="1.9" height="1.9" fill="#111"/><text x="485.3" y="454.2">qvb41a47.</text>
<circle cx="553.7" cy="465.5" r="6.7" fill="#cfe2f6"/><path d="M551.1 465.8L556.1 462.7M551.1 465.8L556.1 468.9" stroke="#222" stroke-width="0.9"/><rect x="549.5" y="464.5" width="3" height="2.6" fill="#222"/><rect x="555.1" y="461.7" width="2.6" height="2" fill="#222"/><rect x="555.1" y="468.1" width="2.6" height="2" fill="#222"/><circle cx="560.1" cy="472.7" r="4.7" fill="#1c1c1c"/><rect x="556.8" y="469.4" width="6.6" height="6.6" rx="1.8" fill="#e3302b"/><rect x="559.1" y="471.8" width="1.9" height="1.9" fill="#111"/><text x="563.7" y="467.5">qbr5aaf2.</text>
<circle cx="599.3" cy="466.3" r="6.7" fill="#cfe2f6"/><path d="M596.7 466.6L601.7 463.5M596.7 466.6L601.7 469.7" stroke="#222" stroke-width="0.9"/><rect x="595.1" y="465.3" width="3" height="2.6" fill="#222"/><rect x="600.7" y="462.5" width="2.6" height="2" fill="#222"/><rect x="600.7" y="468.9" width="2.6" height="2" fill="#222"/><circle cx="605.7" cy="473.5" r="4.7" fill="#1c1c1c"/><rect x="602.4" y="470.2" width="6.6" height="6.6" rx="1.8" fill="#e3302b"/><rect x="604.7" y="472.6" width="1.9" height="1.9" fill="#111"/><text x="609.3" y="468.3">qbrbd093.</text>
<circle cx="420" cy="505.2" r="6.6" fill="#bfd2ea" stroke="#cadcf1" stroke-width="0.8"/><rect x="416.1" y="501.2" width="7.8" height="8" rx="1.4" fill="#363636"/><path d="M417.4 507.5v-2.2l1-0.8q1.6-2.2 3.2 0l1 0.8v2.2z" fill="#bccde2"/><circle cx="426.4" cy="512.4" r="4.7" fill="#1c1c1c"/><rect x="423.1" y="509.1" width="6.6" height="6.6" rx="1.8" fill="#e3302b"/><rect x="425.4" y="511.4" width="1.9" height="1.9" fill="#111"/><text x="430" y="507.2">qvobd093.</text>
<circle cx="470.2" cy="516.3" r="6.6" fill="#bfd2ea" stroke="#cadcf1" stroke-width="0.8"/><rect x="466.3" y="512.3" width="7.8" height="8" rx="1.4" fill="#363636"/><path d="M467.6 518.6v-2.2l1-0.8q1.6-2.2 3.2 0l1 0.8v2.2z" fill="#bccde2"/><circle cx="476.6" cy="523.5" r="4.7" fill="#1c1c1c"/><rect x="473.3" y="520.2" width="6.6" height="6.6" rx="1.8" fill="#e3302b"/><rect x="475.6" y="522.5" width="1.9" height="1.9" fill="#111"/><text x="480.2" y="518.3">qvb5aaf2.</text>
<circle cx="517.7" cy="511.2" r="6.6" fill="#bfd2ea" stroke="#cadcf1" stroke-width="0.8"/><rect x="513.8" y="507.2" width="7.8" height="8" rx="1.4" fill="#363636"/><path d="M515.1 513.5v-2.2l1-0.8q1.6-2.2 3.2 0l1 0.8v2.2z" fill="#bccde2"/><circle cx="524.1" cy="518.4" r="4.7" fill="#1c1c1c"/><rect x="520.8" y="515.1" width="6.6" height="6.6" rx="1.8" fill="#e3302b"/><rect x="523.1" y="517.4" width="1.9" height="1.9" fill="#111"/><text x="527.7" y="513.2">qvbbd093.</text>
<circle cx="617.4" cy="378.9" r="6.6" fill="#f4f400"/><rect x="613.4" y="374.9" width="8" height="8" rx="1" fill="none" stroke="#3c3c3c" stroke-width="1.2"/><path d="M614.8 381.2v-2l1.4-1 1.2-1.2 1.2 1.2 1.4 1v2z" fill="#2e2e2e"/><circle cx="623.8" cy="386.1" r="4.7" fill="#1c1c1c"/><rect x="620.5" y="382.8" width="6.6" height="6.6" rx="1.8" fill="#e3302b"/><rect x="622.8" y="385.1" width="1.9" height="1.9" fill="#111"/><circle cx="610.7" cy="385.9" r="2.6" fill="#f03a2e"/><text x="627.4" y="380.9">tap5aaf2.</text>
<circle cx="649.2" cy="379.6" r="6.6" fill="#f4f400"/><rect x="645.2" y="375.6" width="8" height="8" rx="1" fill="none" stroke="#3c3c3c" stroke-width="1.2"/><path d="M646.6 381.9v-2l1.4-1 1.2-1.2 1.2 1.2 1.4 1v2z" fill="#2e2e2e"/><circle cx="655.6" cy="386.8" r="4.7" fill="#1c1c1c"/><rect x="652.3" y="383.5" width="6.6" height="6.6" rx="1.8" fill="#e3302b"/><rect x="654.6" y="385.9" width="1.9" height="1.9" fill="#111"/><circle cx="642.5" cy="386.6" r="2.6" fill="#f03a2e"/><text x="659.2" y="381.6">tapbd093.</text>
<circle cx="683.6" cy="398.5" r="6.6" fill="#bfd2ea" stroke="#cadcf1" stroke-width="0.8"/><rect x="679.6" y="394.5" width="8" height="8" rx="1" fill="none" stroke="#3a3a3a" stroke-width="1.1"/><path d="M681 400.8v-2l1.4-1 1.2-1.2 1.2 1.2 1.4 1v2z" fill="#333"/><text x="693.6" y="400.5">br-ex</text>
<circle cx="665.6" cy="514.4" r="7.9" fill="#fcd3a2"/><rect x="664.2" y="510.4" width="2.8" height="2" rx="0.3" fill="#1e1e1e"/><path d="M665.6 512.3v2.3M662.3 514.7h6.6M662.3 514.7v1.5M665.6 514.7v1.5M668.9 514.7v1.5" stroke="#1e1e1e" stroke-width="0.75" fill="none"/><rect x="661.2" y="516.2" width="2.2" height="2.3" rx="0.3" fill="#1e1e1e"/><rect x="664.5" y="516.2" width="2.2" height="2.3" rx="0.3" fill="#1e1e1e"/><rect x="667.8" y="516.2" width="2.2" height="2.3" rx="0.3" fill="#1e1e1e"/><text x="675.6" y="516.4">br-ex</text>
<circle cx="780.6" cy="427.2" r="6.6" fill="#bfd2ea" stroke="#cadcf1" stroke-width="0.8"/><rect x="776.7" y="423.2" width="7.8" height="8" rx="1.4" fill="#363636"/><path d="M778 429.5v-2.2l1-0.8q1.6-2.2 3.2 0l1 0.8v2.2z" fill="#bccde2"/>
<circle cx="108.3" cy="448.6" r="6.6" fill="#bfd2ea" stroke="#cadcf1" stroke-width="0.8"/><rect x="104.3" y="444.6" width="8" height="8" rx="1" fill="none" stroke="#3a3a3a" stroke-width="1.1"/><path d="M105.7 450.9v-2l1.4-1 1.2-1.2 1.2 1.2 1.4 1v2z" fill="#333"/><circle cx="114.7" cy="455.8" r="4.7" fill="#1c1c1c"/><rect x="111.4" y="452.5" width="6.6" height="6.6" rx="1.8" fill="#e3302b"/><rect x="113.8" y="454.9" width="1.9" height="1.9" fill="#111"/><text x="118.3" y="450.6">qr-9785e.</text>
<circle cx="129" cy="473.4" r="6.6" fill="#bfd2ea" stroke="#cadcf1" stroke-width="0.8"/><rect x="125" y="469.4" width="8" height="8" rx="1" fill="none" stroke="#3a3a3a" stroke-width="1.1"/><path d="M126.4 475.7v-2l1.4-1 1.2-1.2 1.2 1.2 1.4 1v2z" fill="#333"/><circle cx="135.4" cy="480.6" r="4.7" fill="#1c1c1c"/><rect x="132.1" y="477.3" width="6.6" height="6.6" rx="1.8" fill="#e3302b"/><rect x="134.5" y="479.6" width="1.9" height="1.9" fill="#111"/><text x="139" y="475.4">qg-21d2e.</text>
<circle cx="87.8" cy="499.7" r="6.6" fill="#bfd2ea" stroke="#cadcf1" stroke-width="0.8"/><path d="M84 497.9l3.8-1.8 3.8 1.8-3.8 1.8z" fill="#333"/><path d="M84 500.3l3.8 1.8 3.8-1.8M84 502.3l3.8 1.8 3.8-1.8" stroke="#333" stroke-width="0.9" fill="none"/><circle cx="81.8" cy="493.7" r="2.1" fill="#333" stroke="#777" stroke-width="0.6"/><circle cx="94.2" cy="506.9" r="4.7" fill="#1c1c1c"/><rect x="90.9" y="503.6" width="6.6" height="6.6" rx="1.8" fill="#e3302b"/><rect x="93.2" y="505.9" width="1.9" height="1.9" fill="#111"/><text x="97.8" y="501.7">qrouter..</text>
<circle cx="141.9" cy="504.2" r="6.6" fill="#bfd2ea" stroke="#cadcf1" stroke-width="0.8"/><rect x="137.9" y="500.2" width="8" height="8" rx="1" fill="none" stroke="#3a3a3a" stroke-width="1.1"/><path d="M139.3 506.5v-2l1.4-1 1.2-1.2 1.2 1.2 1.4 1v2z" fill="#333"/><circle cx="148.3" cy="511.4" r="4.7" fill="#1c1c1c"/><rect x="145" y="508.1" width="6.6" height="6.6" rx="1.8" fill="#e3302b"/><rect x="147.4" y="510.4" width="1.9" height="1.9" fill="#111"/><text x="151.9" y="506.2">qr-bc6b3.</text>
<circle cx="51.7" cy="533.8" r="6.6" fill="#bfd2ea" stroke="#cadcf1" stroke-width="0.8"/><rect x="47.7" y="529.8" width="8" height="8" rx="1" fill="none" stroke="#3a3a3a" stroke-width="1.1"/><path d="M49.1 536.1v-2l1.4-1 1.2-1.2 1.2 1.2 1.4 1v2z" fill="#333"/><text x="61.7" y="535.8">lo</text>
</g>
</svg></div>
<!-- zoom buttons -->
<div class="a" style="left:14.8px;top:513px;width:22.3px;height:22px;background:#337ab7;border-radius:2.5px;color:#fff;text-align:center;line-height:21px;font-size:8px">+</div>
<div class="a" style="left:42.8px;top:513px;width:20.1px;height:22px;background:#337ab7;border-radius:2.5px;color:#fff;text-align:center;line-height:21px;font-size:8px">-</div>
<div class="a" style="left:18px;top:538px;width:42px;height:22.7px;background:#337ab7;border-radius:2.5px;color:#fff;text-align:center;line-height:22px;font-size:9.33px">Reset</div>
<!-- scrollbar -->
<div class="a" style="left:789px;top:31px;width:1px;height:547px;background:#1a1a1a"></div>
<div class="a" style="left:790px;top:32px;width:10px;height:546px;background:#f1f1f1"></div>
<div class="a" style="left:792px;top:41.5px;width:6.6px;height:525.5px;background:#c1c1c1"></div>
<div class="a" style="left:792.3px;top:35px;width:0;height:0;border-left:3px solid transparent;border-right:3px solid transparent;border-bottom:3px solid #a3a3a3"></div>
<div class="a" style="left:792.3px;top:571px;width:0;height:0;border-left:3px solid transparent;border-right:3px solid transparent;border-top:3px solid #505050"></div>
<!-- sidebar -->
<div class="a" style="left:800px;top:31px;width:400px;height:547px;background:#333"></div>
<div class="a" style="left:800px;top:31px;width:3px;height:547px;background:#2a2a2a"></div>
<div class="a" style="left:813.5px;top:35px;width:52.5px;height:26px;background:#232323"></div>
<div class="a" style="left:868.2px;top:35px;width:61.6px;height:26px;background:#111"></div>
<div class="a" style="left:823.6px;top:41px;line-height:12px;color:#ddd">Capture</div>
<div class="a" style="left:877.9px;top:41px;line-height:12px;color:#ddd">Generator</div>
<div class="a" style="left:813.5px;top:61px;width:376.5px;height:392.4px;background:#232323"></div>
<!-- captures box -->
<div class="a" style="left:824.3px;top:85.2px;width:355.5px;height:85.1px;background:#111;border-radius:3px"></div>
<div class="a" style="left:826.9px;top:88px;line-height:11px;font-weight:bold;color:#eee">0df68136-6478-4f77-6c7f-fb239d5ed6be</div>
<div class="a" style="left:839.9px;top:105px;line-height:11px;font-weight:bold;color:#eee">Query</div>
<div class="a" style="left:872.7px;top:105px;width:304px;height:12.7px;background:#333;border-radius:2px"></div>
<div class="a" style="left:873.5px;top:105.5px;line-height:10px;font-family:'Liberation Mono',monospace;font-size:7.3px;color:#bbb">G.V().Has('Name', 'br-int', 'Type', 'ovsbridge')</div>
<div class="a" style="left:826.9px;top:124.3px;line-height:11px;font-weight:bold;color:#eee">6064ca8a-d9bd-4d3a-46c6-69e1eb8f5463</div>
<div class="a" style="left:839.9px;top:141.6px;line-height:11px;font-weight:bold;color:#eee">Query</div>
<div class="a" style="left:872.7px;top:141.4px;width:304px;height:13px;background:#333;border-radius:2px"></div>
<div class="a" style="left:873.5px;top:142px;line-height:10px;font-family:'Liberation Mono',monospace;font-size:7.3px;color:#bbb">G.V().Has('Name', Regex('^tap.*'))</div>
<svg class="a" style="left:1166.3px;top:87.2px" width="11" height="12" viewBox="0 0 11 12"><path d="M3.6 2.6V1.6q0-0.9 0.9-0.9h2.1q0.9 0 0.9 0.9v1h-1.1v-0.8h-1.7v0.8z" fill="#c24d4a"/><rect x="0.6" y="2.6" width="9.7" height="1.3" rx="0.3" fill="#c24d4a"/><path d="M1.3 3.8h8.5l-0.4 7.6H1.7z" fill="#c24d4a"/><rect x="2.8" y="4.8" width="5.3" height="5.6" fill="#4a1c1b"/><rect x="4.5" y="4.8" width="0.6" height="5.6" fill="#9a3e3c"/><rect x="6.1" y="4.8" width="0.6" height="5.6" fill="#9a3e3c"/></svg>
<svg class="a" style="left:1166.3px;top:124.3px" width="11" height="12" viewBox="0 0 11 12"><path d="M3.6 2.6V1.6q0-0.9 0.9-0.9h2.1q0.9 0 0.9 0.9v1h-1.1v-0.8h-1.7v0.8z" fill="#c24d4a"/><rect x="0.6" y="2.6" width="9.7" height="1.3" rx="0.3" fill="#c24d4a"/><path d="M1.3 3.8h8.5l-0.4 7.6H1.7z" fill="#c24d4a"/><rect x="2.8" y="4.8" width="5.3" height="5.6" fill="#4a1c1b"/><rect x="4.5" y="4.8" width="0.6" height="5.6" fill="#9a3e3c"/><rect x="6.1" y="4.8" width="0.6" height="5.6" fill="#9a3e3c"/></svg>
<!-- form box -->
<div class="a" style="left:824.3px;top:177.6px;width:355.2px;height:252.4px;background:#111;border-radius:3px"></div>
<div class="a" style="left:827.1px;top:181px;line-height:11px;font-weight:bold;color:#eee">Name</div>
<div class="a" style="left:827.1px;top:197.7px;width:349.7px;height:19.9px;background:#fff;border-radius:2px"></div>
<div class="a" style="left:827.1px;top:228px;line-height:11px;font-weight:bold;color:#eee">Description</div>
<div class="a" style="left:827.1px;top:244.2px;width:349.7px;height:31.8px;background:#fff;border-radius:2px"></div>
<div class="a" style="left:827.1px;top:284px;width:7.4px;height:7.4px"></div>
<div class="a" style="left:827.1px;top:289.1px;width:7.4px;height:7.4px;border-radius:50%;background:#e0e0e0"></div>
<div class="a" style="left:915.8px;top:289.1px;width:7.4px;height:7.4px;border-radius:50%;background:#e0e0e0;border:2px solid #e0e0e0"><div style="width:3.4px;height:3.4px;border-radius:50%;background:#444"></div></div>
<div class="a" style="left:840.5px;top:286px;line-height:11px;color:#ddd">Nodes selection</div>
<div class="a" style="left:929px;top:286px;line-height:11px;color:#ddd">Gremlin Expression</div>
<div class="a" style="left:826.8px;top:310.5px;line-height:11px;font-weight:bold;color:#eee">Query</div>
<div class="a" style="left:827.1px;top:326.8px;width:349.7px;height:67.8px;background:#fff;border-radius:2px"></div>
<div class="a" style="left:834.1px;top:331.5px;line-height:10px;font-size:8px;color:#555">G.Flows().Has('Network','10.0.0.18','Transport','80').Nodes()</div>
<div class="a" style="left:826.8px;top:405px;width:36.4px;height:22.3px;background:#337ab7;border-radius:2.5px;color:#fff;text-align:center;line-height:21px">Start</div>
<div class="a" style="left:866px;top:405px;width:46.8px;height:22.3px;background:#d9534f;border-radius:2.5px;color:#fff;text-align:center;line-height:21px">Cancel</div>
</body></html>
